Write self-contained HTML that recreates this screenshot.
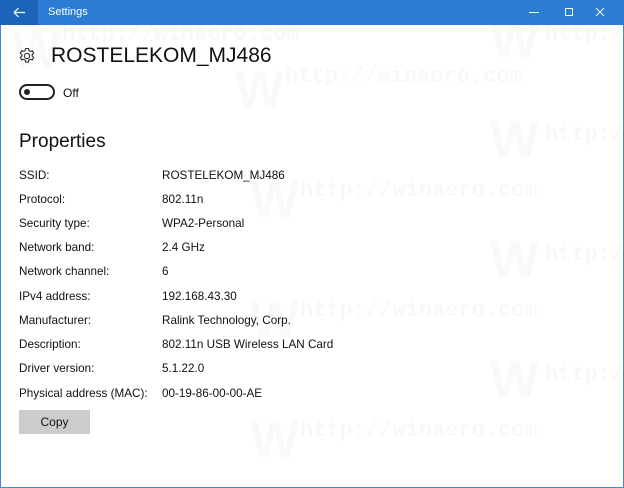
<!DOCTYPE html>
<html style="overflow:hidden;width:624px;height:488px"><head><style>
html,body{margin:0;width:624px;height:488px;overflow:hidden}
body{font-family:"Liberation Sans",sans-serif;background:#fff;position:relative}
.win{position:absolute;left:0;top:0;width:622px;height:487px;border:1px solid #3c8ad8;border-top:none}
.tb{position:absolute;left:0;top:0;width:624px;height:25px;background:#2b7cd3}
.back{position:absolute;left:0;top:0;width:38px;height:25px;background:#1c64b8}
.t{position:absolute;color:#fff;font-size:11px;left:48px;top:6px}
.wm{position:absolute;color:#f8f8f8;font-weight:bold;font-size:22px;font-family:"Liberation Mono",monospace}
.wW{position:absolute;color:#f9f9f9;font-weight:bold;font-size:52px}
.r{position:absolute;left:19px;font-size:11.7px;color:#111}
.v{position:absolute;left:162px;font-size:11.7px;color:#111}
</style></head><body>
<div class="wW" style="left:12px;top:20px">W</div><div class="wm" style="left:62px;top:22px">http://winaero.com</div>
<div class="wW" style="left:235px;top:60px">W</div><div class="wm" style="left:285px;top:64px">http://winaero.com</div>
<div class="wW" style="left:490px;top:10px">W</div><div class="wm" style="left:545px;top:22px">http://wi</div>
<div class="wW" style="left:250px;top:170px">W</div><div class="wm" style="left:300px;top:178px">http://winaero.com</div>
<div class="wW" style="left:490px;top:110px">W</div><div class="wm" style="left:545px;top:122px">http://wi</div>
<div class="wW" style="left:250px;top:290px">W</div><div class="wm" style="left:300px;top:298px">http://winaero.com</div>
<div class="wW" style="left:490px;top:230px">W</div><div class="wm" style="left:545px;top:242px">http://wi</div>
<div class="wW" style="left:490px;top:350px">W</div><div class="wm" style="left:545px;top:362px">http://wi</div>
<div class="wW" style="left:250px;top:410px">W</div><div class="wm" style="left:300px;top:418px">http://winaero.com</div>
<div class="win"></div>
<div class="tb"><div class="back"><svg width="38" height="25"><path d="M14 12.5h11M14 12.5l4.5-4.5M14 12.5l4.5 4.5" stroke="#fff" stroke-width="1.2" fill="none"/></svg></div>
<div class="t">Settings</div>
<svg style="position:absolute;left:520px;top:0" width="104" height="25"><path d="M9 12.5h10" stroke="#fff"/><rect x="45.5" y="8.5" width="7" height="7" fill="none" stroke="#fff"/><path d="M76 8l8 8M84 8l-8 8" stroke="#fff" stroke-width="1"/></svg></div>
<svg style="position:absolute;left:18px;top:47px" width="18" height="18" viewBox="0 0 18 18"><g fill="none" stroke="#333" stroke-width="1.1"><circle cx="9" cy="9" r="2.6"/><path d="M7.6 1.5h2.8l.4 2 1.6.9 1.9-.7 1.4 2.4-1.5 1.3v1.8l1.5 1.3-1.4 2.4-1.9-.7-1.6.9-.4 2H7.6l-.4-2-1.6-.9-1.9.7-1.4-2.4 1.5-1.3V7.4L2.3 6.1l1.4-2.4 1.9.7 1.6-.9z"/></g></svg>
<div style="position:absolute;left:51px;top:44px;font-size:21px;color:#111">ROSTELEKOM_MJ486</div>
<div style="position:absolute;left:19px;top:84px;width:32px;height:12px;border:2px solid #222;border-radius:8px"></div>
<div style="position:absolute;left:24px;top:89px;width:6px;height:6px;border-radius:50%;background:#222"></div>
<div style="position:absolute;left:63px;top:86px;font-size:12px;color:#111">Off</div>
<div style="position:absolute;left:19px;top:131px;font-size:19px;color:#111">Properties</div>
<div class="r" style="top:169px">SSID:</div><div class="v" style="top:169px">ROSTELEKOM_MJ486</div>
<div class="r" style="top:193px">Protocol:</div><div class="v" style="top:193px">802.11n</div>
<div class="r" style="top:217px">Security type:</div><div class="v" style="top:217px">WPA2-Personal</div>
<div class="r" style="top:241px">Network band:</div><div class="v" style="top:241px">2.4 GHz</div>
<div class="r" style="top:265px">Network channel:</div><div class="v" style="top:265px">6</div>
<div class="r" style="top:290px">IPv4 address:</div><div class="v" style="top:290px">192.168.43.30</div>
<div class="r" style="top:314px">Manufacturer:</div><div class="v" style="top:314px">Ralink Technology, Corp.</div>
<div class="r" style="top:338px">Description:</div><div class="v" style="top:338px">802.11n USB Wireless LAN Card</div>
<div class="r" style="top:362px">Driver version:</div><div class="v" style="top:362px">5.1.22.0</div>
<div class="r" style="top:387px">Physical address (MAC):</div><div class="v" style="top:387px">00-19-86-00-00-AE</div>
<div style="position:absolute;left:19px;top:410px;width:71px;height:24px;background:#cccccc;font-size:12px;color:#111;text-align:center;line-height:24px">Copy</div>
</body></html>
